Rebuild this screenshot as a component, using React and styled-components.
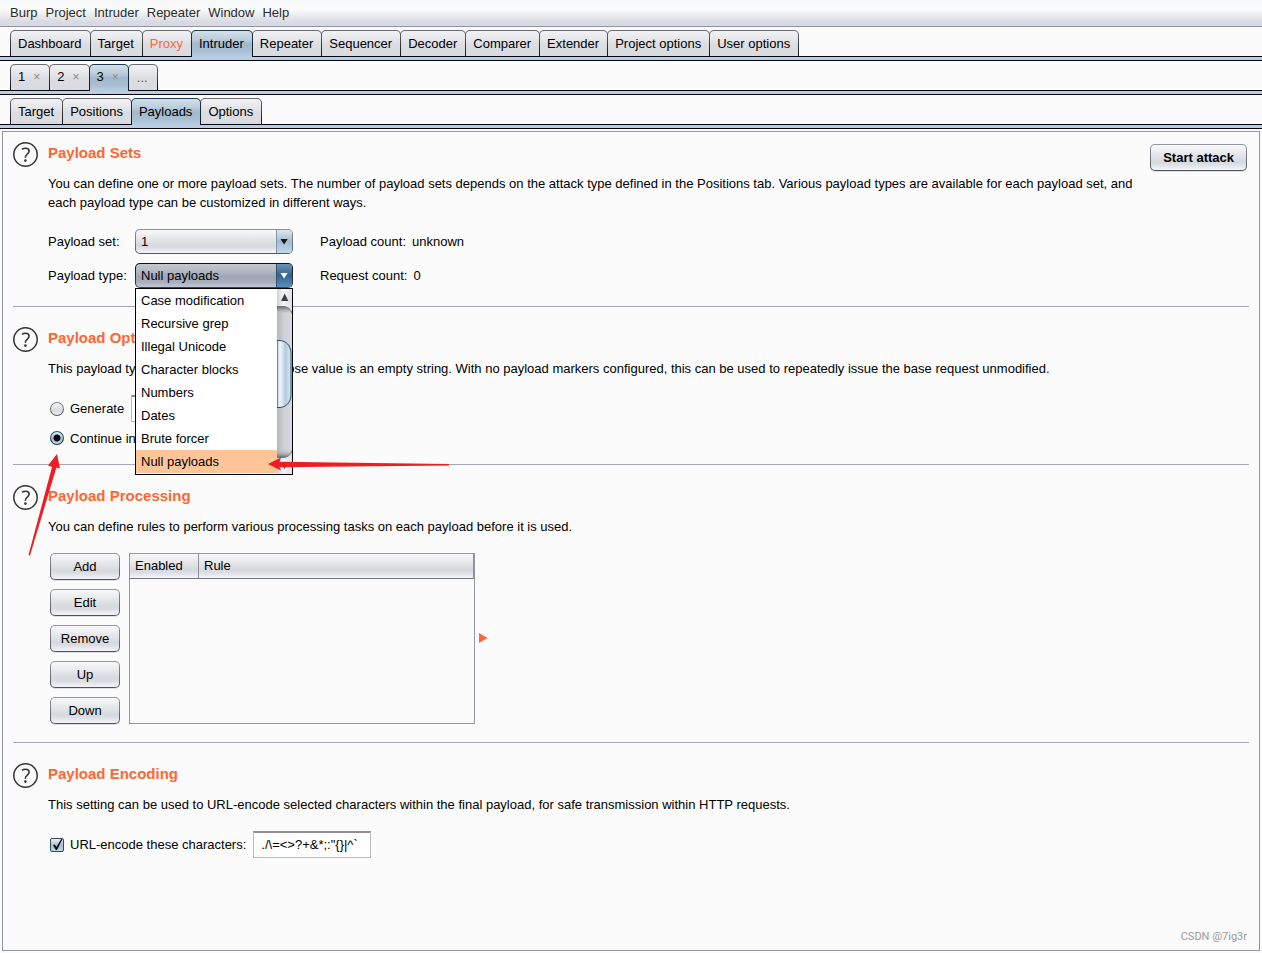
import React, { useState } from 'react'
import styled, { createGlobalStyle } from 'styled-components'

const GlobalStyle = createGlobalStyle`
    * {
        box-sizing: border-box;
    }
    body {
        margin: 0;
        background: #fbfbfb;
        color: #000;
        font: 13px/19px "Liberation Sans", Arial, sans-serif;
    }
    button, input, select {
        font: inherit;
        color: inherit;
    }
`;

const fill = 'linear-gradient(#f8f9fa, #e7e8eb 35%, #d6d9df 65%, #d9dce2 75%, #f3f5fb)';

const Page = styled.div`
    position: relative;
    display: flex;
    flex-direction: column;
    min-height: 100vh;
`;

const MenuBar = styled.nav`
    display: flex;
    gap: 8px;
    height: 27px;
    padding: 0 10px;
    border-bottom: 1px solid #8f92a0;
    background: linear-gradient(#f6f7f9, #fbfbfb 35%, #d7dae2 85%, #d8dbe3);
`;

const MenuItem = styled.button`
    padding: 0 0 2px;
    border: 0;
    background: none;
    color: #2b2b2b;
`;

const TabStrip = styled.div`
    display: flex;
    align-items: flex-start;
    height: 29px;
    padding: 3px 10px 0;
`;

const TabBand = styled.div`
    height: 5px;
    border: solid #05050f;
    border-width: 1px 0;
    background: #b9cee1;
`;

const Tab = styled.button`
    position: relative;
    z-index: ${props => props.$active ? 1 : 0};
    height: ${props => props.$active ? 27 : 26}px;
    min-width: 30px;
    margin-right: -1px;
    padding: 0 8px ${props => props.$active ? 2 : 1}px 7px;
    white-space: nowrap;
    border: 1px solid transparent;
    border-bottom: 0;
    border-radius: 5px 5px 0 0;
    color: ${props => props.$color || '#000'};
    background:
        ${props => props.$active
            ? 'linear-gradient(#d3e0ea, #b9cbda 35%, #a2b8cc 50%, #a7bdd2 75%, #b9cee1)'
            : 'linear-gradient(#f2f2f4, #e5e6ea 35%, #dcdde2 55%, #dadbe1)'} padding-box,
        ${props => props.$active
            ? 'linear-gradient(#1f3a52, #0c1220)'
            : 'linear-gradient(#6c6c76, #101018)'} border-box;
`;

const Close = styled.span`
    margin: 0 1px 0 8px;
    color: #8b8b8b;
    font-size: 12px;
`;

const Panel = styled.main`
    flex: 1;
    margin: 2px;
    padding: 0 10px;
    border: 1px solid #9297a1;
`;

const Section = styled.section`
    display: flex;
    align-items: flex-start;
    gap: 10px;
    padding: 20px 0 18px;
    border-top: 1px solid #a5a8b3;
    &:first-child {
        padding-top: 10px;
        border-top: 0;
    }
`;

const SectionBody = styled.div`
    flex: 1;
    min-width: 0;
    padding-top: 1px;
`;

const HelpButton = styled.button`
    width: 25px;
    height: 25px;
    padding: 0;
    border: 0;
    background: none;
    svg {
        display: block;
    }
`;

const Title = styled.h2`
    margin: 0 0 11px;
    color: #ff6633;
    font-size: 15px;
    line-height: 20px;
    font-weight: bold;
`;

const Text = styled.p`
    margin: 0 0 17px;
`;

const Button = styled.button`
    height: 27px;
    padding: 0 12px;
    border: 1px solid transparent;
    border-radius: 5px;
    background: ${fill} padding-box, linear-gradient(#94979d, #4d5159) border-box;
    box-shadow: 0 1px 0 #dfe0e4;
`;

const StartButton = styled(Button)`
    margin: 2px 2px 0 -8px;
    font-weight: bold;
`;

const SetGrid = styled.div`
    display: grid;
    grid-template-columns: 87px 158px auto;
    justify-content: start;
    align-items: center;
    row-gap: 9px;
`;

const Count = styled.span`
    display: flex;
    gap: 6px;
    padding-left: 27px;
`;

const Combo = styled.div`
    position: relative;
    height: 25px;
    > svg {
        position: absolute;
        top: 1px;
        right: 1px;
        pointer-events: none;
    }
`;

const Select = styled.select`
    appearance: none;
    width: 100%;
    height: 25px;
    padding: 0 18px 0 5px;
    border: 1px solid transparent;
    border-radius: 5px;
    outline: 0;
    background:
        ${props => props.$open
            ? 'linear-gradient(#c3c7ce, #b0b5c0 35%, #9fa5b3 55%, #a6acb9 75%, #bfc6d6)'
            : fill} padding-box,
        ${props => props.$open
            ? 'linear-gradient(#0a0a12, #3b4453)'
            : 'linear-gradient(#8d929a, #4c5c6c)'} border-box;
`;

const Popup = styled.div`
    position: absolute;
    z-index: 2;
    top: 25px;
    left: 0;
    right: 0;
    display: flex;
    border: 1px solid #000;
    background: #fff;
`;

const OptionList = styled.ul`
    flex: 1;
    margin: 0;
    padding: 0 0 1px;
    list-style: none;
`;

const Option = styled.li`
    height: 23px;
    padding-left: 5px;
    line-height: 23px;
    background: ${props => props.$active ? '#ffc599' : 'none'};
`;

const ScrollBar = styled.div`
    width: 15px;
    background: linear-gradient(90deg, #b5b7bd, #cfd1d7 50%, #d6d8de);
    svg {
        display: block;
    }
`;

const Options = styled.div`
    margin-left: 2px;
`;

const OptionRow = styled.div`
    display: flex;
    align-items: center;
    gap: 7px;
    & + & {
        height: 16px;
        margin-top: 8px;
    }
`;

const CheckLabel = styled.label`
    display: flex;
    align-items: center;
    gap: 6px;
    white-space: nowrap;
`;

const Radio = styled.input`
    appearance: none;
    width: 14px;
    height: 14px;
    margin: 0;
    border: 1px solid transparent;
    border-radius: 50%;
    background:
        linear-gradient(#f7f8f9, #d8dae0 60%, #eceef3) padding-box,
        linear-gradient(#85888f, #555962) border-box;
    &:checked {
        background:
            radial-gradient(circle, #0b0b0f 3px, transparent 4px) padding-box,
            linear-gradient(#e6eff6, #a5bccf 55%, #c6d9e9) padding-box,
            linear-gradient(#33536f, #1c2f42) border-box;
    }
`;

const CheckBox = styled.span`
    position: relative;
    display: flex;
    input {
        appearance: none;
        width: 14px;
        height: 14px;
        margin: 0;
        border: 1px solid #2f4a63;
        border-radius: 2px;
        background: linear-gradient(#e9f0f6, #a7bdcf 55%, #c4d7e7);
    }
    svg {
        position: absolute;
        top: 0;
        left: 0;
        pointer-events: none;
    }
`;

const Field = styled.input`
    width: ${props => props.$width}px;
    height: 27px;
    padding: 0 7px 1px;
    border: 1px solid #b9babe;
    border-top: 2px solid #8f9094;
    background: #fff;
`;

const RuleEditor = styled.div`
    display: flex;
    align-items: center;
    gap: 4px;
    margin-left: 2px;
`;

const ButtonColumn = styled.div`
    display: flex;
    flex-direction: column;
    gap: 9px;
    width: 70px;
    margin-right: 5px;
    ${Button} {
        padding: 0;
    }
`;

const TableFrame = styled.div`
    align-self: stretch;
    width: 346px;
    border: 1px solid #9297a1;
`;

const Table = styled.table`
    width: 100%;
    table-layout: fixed;
    border-collapse: separate;
    border-spacing: 0;
    th {
        height: 25px;
        padding: 0 5px 2px;
        text-align: left;
        font-weight: normal;
        border-right: 1px solid #8c9099;
        border-bottom: 1px solid #73767f;
        background: ${fill};
    }
    th:first-child {
        width: 69px;
    }
`;

const Arrows = styled.svg`
    position: absolute;
    z-index: 3;
    top: 0;
    left: 0;
    pointer-events: none;
`;

const Watermark = styled.span`
    position: absolute;
    right: 15px;
    bottom: 7px;
    color: #999;
    font: 11px/18px Roboto, sans-serif;
`;

const menus = ['Burp', 'Project', 'Intruder', 'Repeater', 'Window', 'Help'];
const mainTabs = ['Dashboard', 'Target', 'Proxy', 'Intruder', 'Repeater', 'Sequencer', 'Decoder',
    'Comparer', 'Extender', 'Project options', 'User options'];
const attackTabs = ['1', '2', '3', '...'];
const subTabs = ['Target', 'Positions', 'Payloads', 'Options'];
const payloadTypes = ['Case modification', 'Recursive grep', 'Illegal Unicode', 'Character blocks',
    'Numbers', 'Dates', 'Brute forcer', 'Null payloads'];

const Tabs = ({ items, active, closable }) => (
    <>
        <TabStrip role="tablist">
            {items.map(item => (
                <Tab
                    key={item}
                    role="tab"
                    aria-selected={item === active}
                    $active={item === active}
                    $color={item === 'Proxy' ? '#ff6633' : item === '...' ? '#555' : undefined}
                >
                    {item}
                    {closable && item !== '...' && <Close>×</Close>}
                </Tab>
            ))}
        </TabStrip>
        <TabBand/>
    </>
);

const Help = () => (
    <HelpButton aria-label="Help">
        <svg width="25" height="25" viewBox="0 0 25 25" fill="none" stroke="#333">
            <circle cx="12.5" cy="12.5" r="11.7" strokeWidth="1.5"/>
            <path d="M9 7.4c1-.8 2.200-1.200 3.600-1.200 2.200 0 3.500 1.200 3.500 2.900 0 1.500-.8 2.300-2 3.200-1.200.9-1.700 1.500-1.700 2.900v.6" strokeWidth="1.600"/>
            <circle cx="12.4" cy="18.600" r="1.300" fill="#333" stroke="none"/>
        </svg>
    </HelpButton>
);

const ComboArrow = ({ open }) => {
    const id = open ? 'arrowOpen' : 'arrowClosed';
    return (
        <svg width="16" height="23" viewBox="0 0 16 23">
            <defs>
                <linearGradient id={id} x1="0" y1="0" x2="0" y2="1">
                    <stop offset="0" stopColor={open ? '#6d93b5' : '#dbe6ee'}/>
                    <stop offset=".5" stopColor={open ? '#34638e' : '#a5bbce'}/>
                    <stop offset="1" stopColor={open ? '#5a8fc0' : '#c0d8ec'}/>
                </linearGradient>
            </defs>
            <path d="M0 0h12a4 4 0 0 1 4 4v15a4 4 0 0 1-4 4H0z" fill={`url(#${id})`}/>
            <path d="M.5 0v23" stroke={open ? '#30506e' : '#7d97ad'}/>
            <path d="M4.500 9h7.200L8.100 14.500z" fill={open ? '#fff' : '#16161c'}/>
        </svg>
    );
};

const ListScroll = () => (
    <ScrollBar aria-hidden="true">
        <svg width="15" height="185" viewBox="0 0 15 185">
            <defs>
                <linearGradient id="thumb" x1="0" x2="1">
                    <stop offset="0" stopColor="#a9bfd3"/>
                    <stop offset=".2" stopColor="#f0f6fa"/>
                    <stop offset=".35" stopColor="#e1ecf4"/>
                    <stop offset=".6" stopColor="#b4ccdf"/>
                    <stop offset="1" stopColor="#d3e9f8"/>
                </linearGradient>
                <linearGradient id="cap" x1="0" x2="1">
                    <stop offset="0" stopColor="#cfd1d6"/>
                    <stop offset=".4" stopColor="#f4f5f7"/>
                    <stop offset="1" stopColor="#dfe1e6"/>
                </linearGradient>
                <linearGradient id="shade" x1="0" y1="0" x2="0" y2="1">
                    <stop offset="0" stopColor="#55575c"/>
                    <stop offset="1" stopColor="#b8bac0" stopOpacity="0"/>
                </linearGradient>
                <linearGradient id="shadeUp" x1="0" y1="1" x2="0" y2="0">
                    <stop offset="0" stopColor="#55575c"/>
                    <stop offset="1" stopColor="#b8bac0" stopOpacity="0"/>
                </linearGradient>
            </defs>
            <path d="M0 17h15v8H0z" fill="url(#shade)"/>
            <path d="M0 161h15v8H0z" fill="url(#shadeUp)"/>
            <path d="M0 0h15v27c0-6-4-9.500-9-9.500H0z" fill="url(#cap)"/>
            <path d="M0 185h15v-26c0 6-4 9.500-9 9.500H0z" fill="url(#cap)"/>
            <path d="M0 17.500h6c5 0 8 3 9 7" fill="none" stroke="#74767c"/>
            <path d="M0 168.500h6c5 0 8-3 9-7" fill="none" stroke="#74767c"/>
            <path d="M0 51.500h2c7 0 12 5 12 13v41c0 8-5 13-12 13H0z" fill="url(#thumb)" stroke="#2b4a68"/>
            <path d="M4 12h7.400L7.700 4.500z" fill="#3d3f44"/>
            <path d="M4 174h7l-3.500 6z" fill="#3d3f44"/>
        </svg>
    </ScrollBar>
);

const App = () => {
    const [encode, setEncode] = useState(true);
    const [mode, setMode] = useState('continue');

    return (
        <Page>
            <GlobalStyle/>
            <MenuBar>
                {menus.map(menu => <MenuItem key={menu}>{menu}</MenuItem>)}
            </MenuBar>
            <Tabs items={mainTabs} active="Intruder"/>
            <Tabs items={attackTabs} active="3" closable/>
            <Tabs items={subTabs} active="Payloads"/>
            <Panel>
                <Section>
                    <Help/>
                    <SectionBody>
                        <Title>Payload Sets</Title>
                        <Text>
                            You can define one or more payload sets. The number of payload sets depends on the attack type defined in the Positions tab. Various payload types are available for each payload set, and each payload type can be customized in different ways.
                        </Text>
                        <SetGrid>
                            <label htmlFor="payload-set">Payload set:</label>
                            <Combo>
                                <Select id="payload-set">
                                    <option>1</option>
                                </Select>
                                <ComboArrow/>
                            </Combo>
                            <Count><span>Payload count:</span><span>unknown</span></Count>
                            <label htmlFor="payload-type">Payload type:</label>
                            <Combo>
                                <Select id="payload-type" defaultValue="Null payloads" $open>
                                    {payloadTypes.map(type => <option key={type}>{type}</option>)}
                                </Select>
                                <ComboArrow open/>
                                <Popup>
                                    <OptionList role="listbox" aria-label="Payload type">
                                        {payloadTypes.map(type => (
                                            <Option
                                                key={type}
                                                role="option"
                                                aria-selected={type === 'Null payloads'}
                                                $active={type === 'Null payloads'}
                                            >
                                                {type}
                                            </Option>
                                        ))}
                                    </OptionList>
                                    <ListScroll/>
                                </Popup>
                            </Combo>
                            <Count><span>Request count:</span><span>0</span></Count>
                        </SetGrid>
                    </SectionBody>
                    <StartButton>Start attack</StartButton>
                </Section>

                <Section>
                    <Help/>
                    <SectionBody>
                        <Title>Payload Options [Null payloads]</Title>
                        <Text>
                            This payload type generates payloads whose value is an empty string. With no payload markers configured, this can be used to repeatedly issue the base request unmodified.
                        </Text>
                        <Options>
                            <OptionRow>
                                <CheckLabel>
                                    <Radio type="radio" name="mode" checked={mode === 'generate'} onChange={() => setMode('generate')}/>
                                    Generate
                                </CheckLabel>
                                <Field $width={90} aria-label="Payloads to generate"/>
                                payloads
                            </OptionRow>
                            <OptionRow>
                                <CheckLabel>
                                    <Radio type="radio" name="mode" checked={mode === 'continue'} onChange={() => setMode('continue')}/>
                                    Continue indefinitely
                                </CheckLabel>
                            </OptionRow>
                        </Options>
                    </SectionBody>
                </Section>

                <Section>
                    <Help/>
                    <SectionBody>
                        <Title>Payload Processing</Title>
                        <Text>You can define rules to perform various processing tasks on each payload before it is used.</Text>
                        <RuleEditor>
                            <ButtonColumn>
                                <Button>Add</Button>
                                <Button>Edit</Button>
                                <Button>Remove</Button>
                                <Button>Up</Button>
                                <Button>Down</Button>
                            </ButtonColumn>
                            <TableFrame>
                                <Table>
                                    <thead>
                                        <tr>
                                            <th>Enabled</th>
                                            <th>Rule</th>
                                        </tr>
                                    </thead>
                                    <tbody/>
                                </Table>
                            </TableFrame>
                            <svg width="9" height="11" viewBox="0 0 9 11">
                                <path d="M0 0l8.500 5L0 10z" fill="#ff6633"/>
                            </svg>
                        </RuleEditor>
                    </SectionBody>
                </Section>

                <Section>
                    <Help/>
                    <SectionBody>
                        <Title>Payload Encoding</Title>
                        <Text>This setting can be used to URL-encode selected characters within the final payload, for safe transmission within HTTP requests.</Text>
                        <Options>
                            <OptionRow>
                                <CheckLabel>
                                    <CheckBox>
                                        <input type="checkbox" checked={encode} onChange={() => setEncode(!encode)}/>
                                        {encode && (
                                            <svg width="14" height="14" viewBox="0 0 14 14">
                                                <path d="M3 7l1.800-.6 1.600 2.600L11.200 1l1.200.3L7 12H5.800z" fill="#0b0b0f"/>
                                            </svg>
                                        )}
                                    </CheckBox>
                                    URL-encode these characters:
                                </CheckLabel>
                                <Field $width={118} aria-label="Characters to encode" defaultValue={'./\\=<>?+&*;:"{}|^`'}/>
                            </OptionRow>
                        </Options>
                    </SectionBody>
                </Section>
            </Panel>
            <Arrows width="460" height="560" viewBox="0 0 460 560" fill="#f01c24">
                <path d="M57 454l3 14.500-3.600-.9L30 555.500l-1.500-.5L52 467l-4-1.500z"/>
                <path d="M268 464l13-6.500-1.500 4.300L449 464v1.500l-169.500 1.700 1.500 3.300z"/>
            </Arrows>
            <Watermark>CSDN @7ig3r</Watermark>
        </Page>
    );
}

export default App;
